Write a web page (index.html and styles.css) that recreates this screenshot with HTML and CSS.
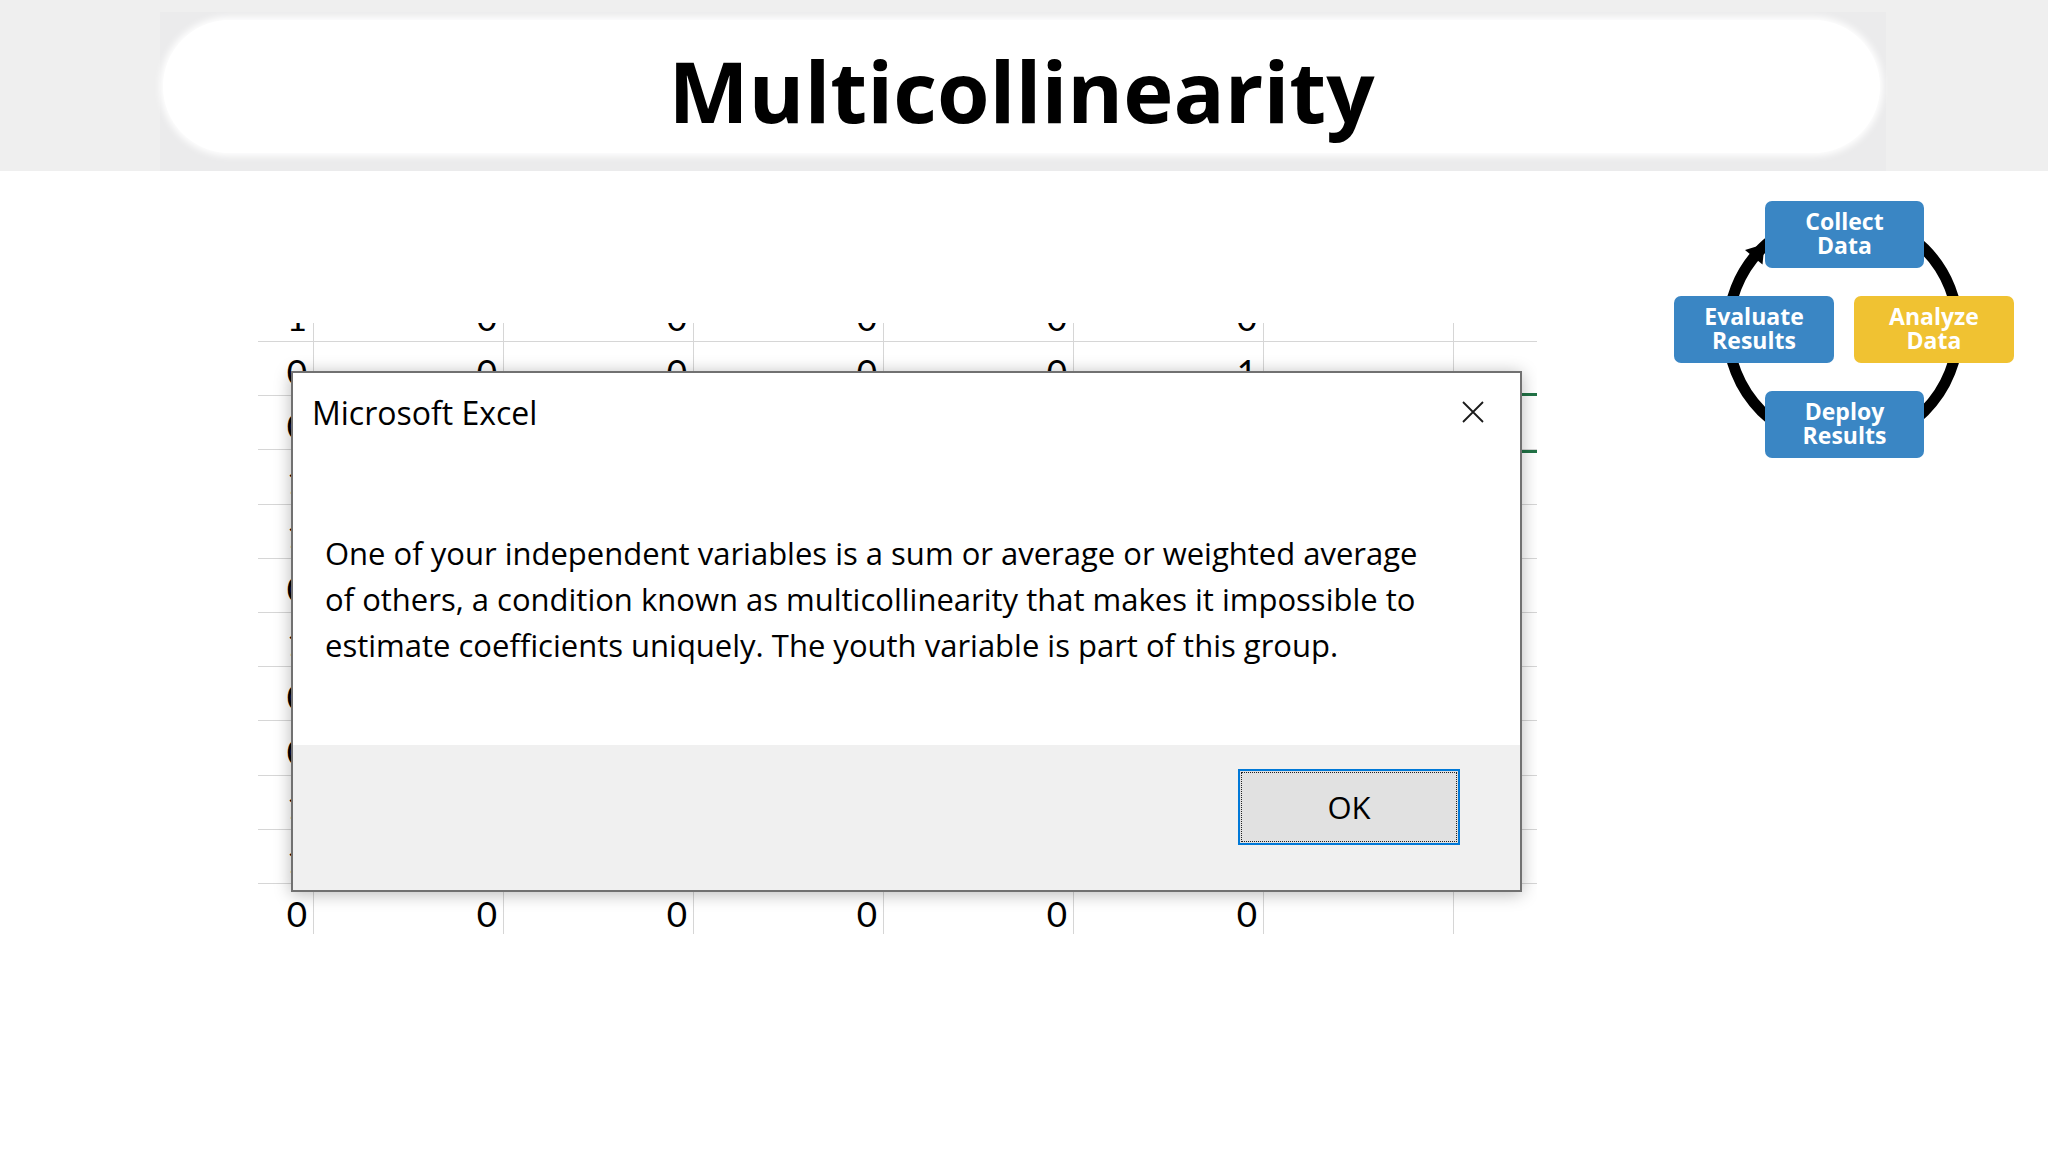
FILE: index.html
```html
<!DOCTYPE html>
<html lang="en">
<head>
<meta charset="utf-8">
<title>Multicollinearity</title>
<link rel="stylesheet" href="styles.css">
</head>
<body>
<header class="banner">
  <div class="banner-inner">
    <div class="pill"><h1 class="title">Multicollinearity</h1></div>
  </div>
</header>
<main class="stage">
  <section class="sheet">
    <div class="grid">
      <div class="c">1</div><div class="c">0</div><div class="c">0</div><div class="c">0</div><div class="c">0</div><div class="c">0</div><div class="c"></div><div class="c"></div>
      <div class="c">0</div><div class="c">0</div><div class="c">0</div><div class="c">0</div><div class="c">0</div><div class="c">1</div><div class="c"></div><div class="c"></div>
      <div class="c">0</div><div class="c">0</div><div class="c">1</div><div class="c">0</div><div class="c">0</div><div class="c">0</div><div class="c"></div><div class="c sel"></div>
      <div class="c">1</div><div class="c">0</div><div class="c">0</div><div class="c">0</div><div class="c">0</div><div class="c">0</div><div class="c"></div><div class="c"></div>
      <div class="c">1</div><div class="c">0</div><div class="c">0</div><div class="c">0</div><div class="c">0</div><div class="c">0</div><div class="c"></div><div class="c"></div>
      <div class="c">0</div><div class="c">1</div><div class="c">0</div><div class="c">0</div><div class="c">0</div><div class="c">0</div><div class="c"></div><div class="c"></div>
      <div class="c">1</div><div class="c">0</div><div class="c">0</div><div class="c">0</div><div class="c">0</div><div class="c">0</div><div class="c"></div><div class="c"></div>
      <div class="c">0</div><div class="c">0</div><div class="c">0</div><div class="c">1</div><div class="c">0</div><div class="c">0</div><div class="c"></div><div class="c"></div>
      <div class="c">0</div><div class="c">0</div><div class="c">0</div><div class="c">0</div><div class="c">1</div><div class="c">0</div><div class="c"></div><div class="c"></div>
      <div class="c">1</div><div class="c">0</div><div class="c">0</div><div class="c">0</div><div class="c">0</div><div class="c">0</div><div class="c"></div><div class="c"></div>
      <div class="c">1</div><div class="c">0</div><div class="c">0</div><div class="c">0</div><div class="c">0</div><div class="c">0</div><div class="c"></div><div class="c"></div>
      <div class="c">0</div><div class="c">0</div><div class="c">0</div><div class="c">0</div><div class="c">0</div><div class="c">0</div><div class="c"></div><div class="c"></div>
    </div>
    <div class="dialog">
      <div class="dlg-head">
        <span class="dlg-title">Microsoft Excel</span>
        <svg class="dlg-close" width="22" height="22" viewBox="0 0 22 22" aria-hidden="true">
          <path d="M1 1 L21 21 M21 1 L1 21" stroke="#1a1a1a" stroke-width="1.8" fill="none"/>
        </svg>
      </div>
      <div class="dlg-body">
        <p class="dlg-msg">One of your independent variables is a sum or average or weighted average<br>of others, a condition known as multicollinearity that makes it impossible to<br>estimate coefficients uniquely. The youth variable is part of this group.</p>
      </div>
      <div class="dlg-foot">
        <button class="ok-btn" type="button">OK</button>
      </div>
    </div>
  </section>
  <aside class="cycle">
    <svg class="ring" width="340" height="260" viewBox="0 0 340 260" aria-hidden="true">
      <circle cx="169" cy="130" r="115" fill="none" stroke="#000" stroke-width="11"/>
      <polygon points="90.5,44 88.5,64.5 71,50" fill="#000"/>
    </svg>
    <div class="step blue s-collect">Collect<br>Data</div>
    <div class="step blue s-evaluate">Evaluate<br>Results</div>
    <div class="step yellow s-analyze">Analyze<br>Data</div>
    <div class="step blue s-deploy">Deploy<br>Results</div>
  </aside>
</main>
</body>
</html>
```

FILE: styles.css
```css
* { box-sizing: border-box; }
html, body {
  margin: 0;
  padding: 0;
  width: 2048px;
  height: 1152px;
  overflow: hidden;
  background: #ffffff;
  font-family: "Open Sans", "Noto Sans", sans-serif;
}

/* Header band */
.banner {
  height: 171px;
  background: #efefef;
  padding: 12px 162px 0 160px;
}
.banner-inner {
  height: 159px;
  background: #ebebec;
  padding: 8px 6px 0 3px;
}
.pill {
  height: 133px;
  background: #ffffff;
  border-radius: 67px;
  box-shadow: 0 0 7px 3px #ffffff;
  display: flex;
  justify-content: center;
}
.title {
  margin: 8px 0 0;
  font-family: "Open Sans", sans-serif;
  font-weight: 700;
  font-size: 85px;
  line-height: 125px;
  color: #000;
}

/* Stage */
.stage {
  display: flex;
  align-items: flex-start;
}

/* Spreadsheet */
.sheet {
  position: relative;
  margin-left: 258px;
  margin-top: 152px;
  width: 1279px;
  height: 611px;
  overflow: hidden;
  flex: none;
}
.grid {
  margin-top: -35.2px;
  display: grid;
  grid-template-columns: 56px repeat(6, 190px) 130px;
  grid-auto-rows: 54.2px;
  width: 1326px;
}
.c {
  border-right: 1px solid #d6d6d6;
  border-bottom: 1px solid #d6d6d6;
  display: flex;
  justify-content: flex-end;
  align-items: flex-end;
  padding: 0 6px 6px 0;
  font-family: Lato, "Liberation Sans", sans-serif;
  font-size: 35px;
  line-height: 35px;
  color: #000;
}
.c.sel {
  outline: 3px solid #217346;
  outline-offset: 0;
}

/* Dialog */
.dialog {
  position: absolute;
  left: 33px;
  top: 48px;
  width: 1231px;
  height: 521px;
  background: #ffffff;
  border: 2px solid #717171;
  box-shadow: 0 2px 16px rgba(0, 0, 0, 0.28);
  display: flex;
  flex-direction: column;
}
.dlg-head {
  height: 60px;
  padding: 20px 36px 0 19px;
  display: flex;
  justify-content: space-between;
  align-items: center;
}
.dlg-title {
  font-size: 32px;
  line-height: 40px;
  color: #000;
}
.dlg-close {
  display: block;
  margin-top: -3px;
}
.dlg-body {
  flex: 1;
  padding: 97px 0 0 32px;
}
.dlg-msg {
  margin: 0;
  font-size: 31px;
  line-height: 46px;
  letter-spacing: 0;
  color: #000;
}
.dlg-foot {
  height: 145px;
  background: #f0f0f0;
  display: flex;
  justify-content: flex-end;
  align-items: flex-start;
  padding: 24px 60px 0 0;
}
.ok-btn {
  width: 222px;
  height: 76px;
  background: #e1e1e1;
  border: 2px solid #0078d7;
  outline: 1px dotted #202020;
  outline-offset: -4px;
  font-family: "Open Sans", sans-serif;
  font-size: 31px;
  color: #000;
  padding: 0;
}

/* Cycle diagram */
.cycle {
  position: relative;
  flex: none;
  width: 340px;
  height: 260px;
  margin-left: 137px;
  margin-top: 29px;
}
.ring {
  position: absolute;
  left: 0;
  top: 0;
}
.step {
  position: absolute;
  width: 160px;
  height: 67px;
  border-radius: 7px;
  display: flex;
  align-items: center;
  justify-content: center;
  text-align: center;
  padding-bottom: 4px;
  color: #ffffff;
  font-family: "Open Sans", sans-serif;
  font-weight: 700;
  font-size: 23px;
  line-height: 24px;
}
.blue { background: #3a86c4; }
.yellow { background: #f0c232; }
.s-collect { left: 91px; top: 1px; width: 159px; }
.s-evaluate { left: 0; top: 96px; }
.s-analyze { left: 180px; top: 96px; }
.s-deploy { left: 91px; top: 191px; width: 159px; }
```
